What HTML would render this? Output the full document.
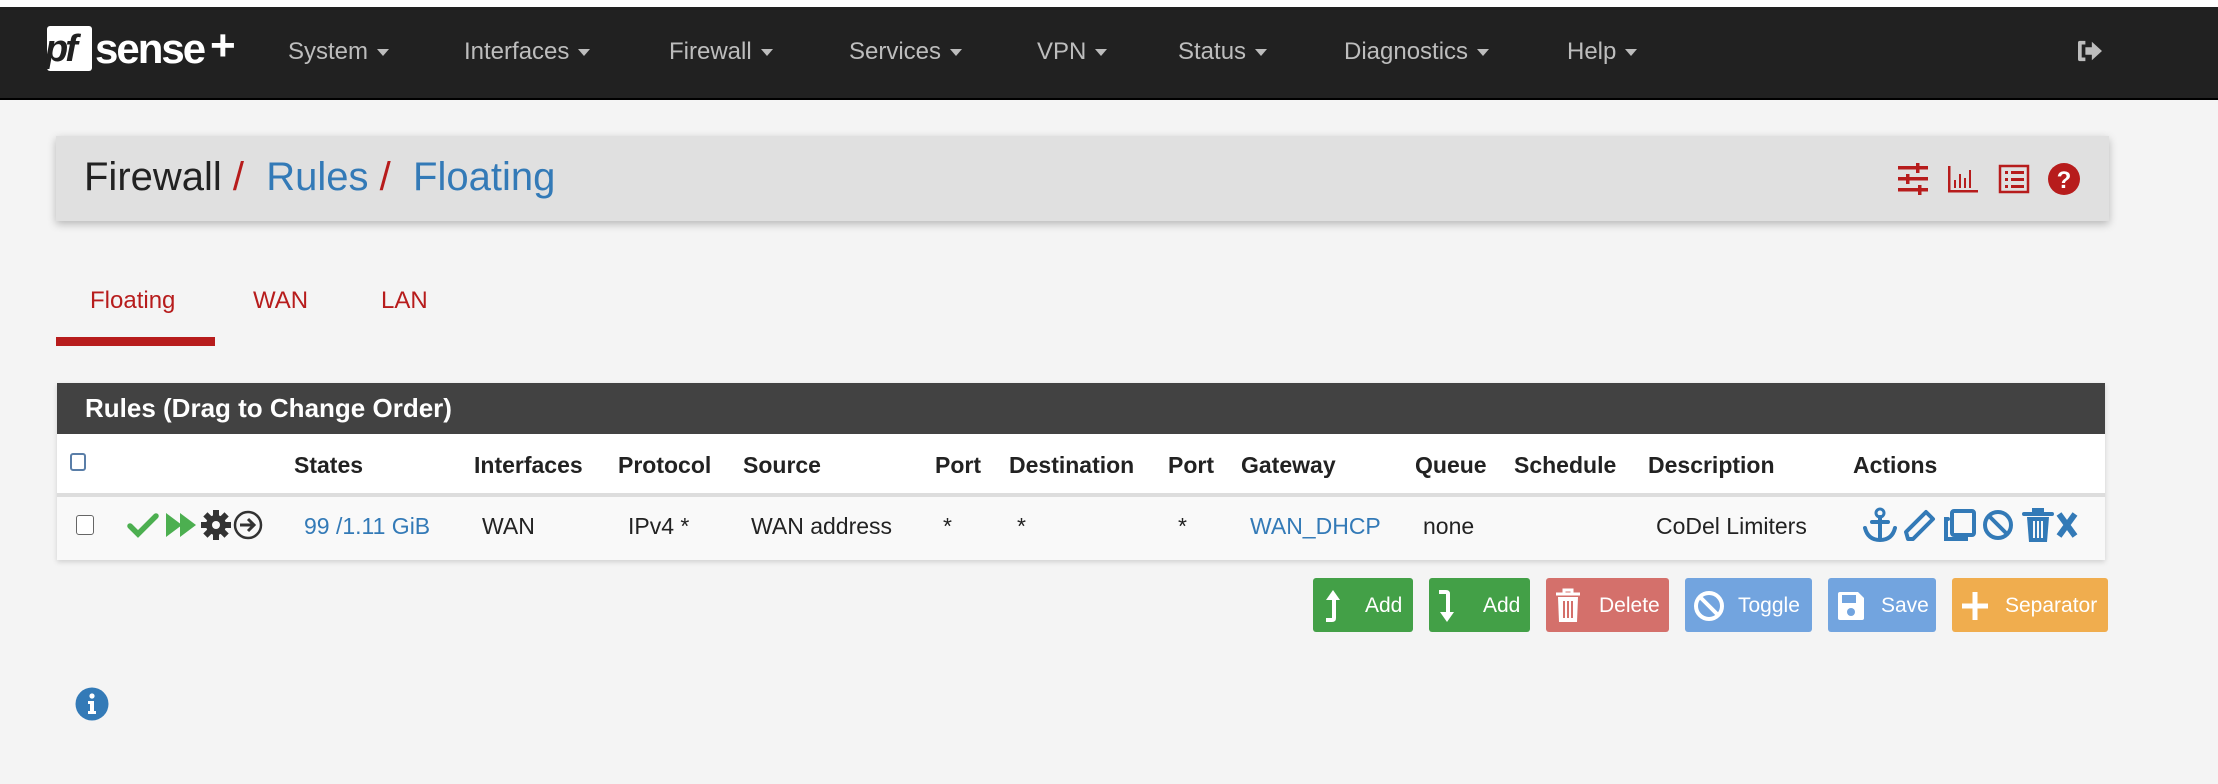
<!DOCTYPE html>
<html><head><meta charset="utf-8"><style>
*{margin:0;padding:0;box-sizing:border-box}
body{width:2218px;height:784px;background:#f4f4f4;font-family:"Liberation Sans",Arial,sans-serif;position:relative;overflow:hidden;color:#222}
.a{position:absolute;white-space:nowrap}
.nav{position:absolute;left:0;top:7px;width:2218px;height:93px;background:#212121;border-bottom:2px solid #000}
.ni{position:absolute;top:31px;color:#bdbdbd;font-size:24px}
.ni:after{content:"";display:inline-block;margin-left:9px;vertical-align:middle;border-left:6px solid transparent;border-right:6px solid transparent;border-top:7px solid #bdbdbd}
.hd{position:absolute;top:452px;font-size:23px;font-weight:bold;color:#222}
.td{position:absolute;top:513px;font-size:23px;color:#222}
.btn{position:absolute;top:578px;height:54px;border-radius:3px;color:#fff;font-size:21px}
.btn span{position:absolute;top:16px}
</style></head><body>
<div class="a" style="left:0;top:0;width:2218px;height:7px;background:#fff"></div>
<div class="nav">
 <div class="a" style="left:47px;top:19px;width:45px;height:45px;background:#fff;border-radius:3px"></div>
 <div class="a" style="left:45px;top:21px;font-size:38px;font-weight:bold;font-style:italic;color:#212121;letter-spacing:-3px">pf</div>
 <div class="a" style="left:95px;top:18px;font-size:42px;font-weight:bold;color:#fff;letter-spacing:-2px">sense</div>
 <div class="a" style="left:210px;top:14px;font-size:44px;font-weight:bold;color:#fff">+</div>
 <div class="ni" style="left:288px">System</div>
 <div class="ni" style="left:464px">Interfaces</div>
 <div class="ni" style="left:669px">Firewall</div>
 <div class="ni" style="left:849px">Services</div>
 <div class="ni" style="left:1037px">VPN</div>
 <div class="ni" style="left:1178px">Status</div>
 <div class="ni" style="left:1344px">Diagnostics</div>
 <div class="ni" style="left:1567px">Help</div>
 <svg class="a" style="left:2076px;top:32px" width="28" height="24" viewBox="0 0 30 26"><path d="M10 2H4Q2 2 2 4V22Q2 24 4 24H10V20H6V6H10Z" fill="#bdbdbd"/><path d="M10 9H17V3L28 13L17 23V17H10Z" fill="#bdbdbd"/></svg>
</div>
<div class="a" style="left:56px;top:136px;width:2053px;height:85px;background:#e0e0e0;box-shadow:0 3px 8px rgba(0,0,0,.25)"></div>
<div class="a" style="left:84px;top:155px;font-size:40px;color:#222">Firewall <span style="color:#b71c1c">/</span> <span style="color:#337ab7">&nbsp;Rules</span> <span style="color:#b71c1c">/</span> <span style="color:#337ab7">&nbsp;Floating</span></div>
<svg class="a" style="left:1896px;top:162px" width="190" height="34" viewBox="0 0 190 34">
 <g fill="#b71c1c"><rect x="2" y="4" width="30" height="3.5"/><rect x="2" y="15" width="30" height="3.5"/><rect x="2" y="26" width="30" height="3.5"/><rect x="20" y="1" width="3.5" height="10"/><rect x="10" y="12" width="3.5" height="10"/><rect x="22" y="23" width="3.5" height="10"/></g>
 <g fill="#b71c1c"><rect x="52" y="4" width="2.5" height="26"/><rect x="52" y="28" width="30" height="2.5"/><rect x="58" y="18" width="2" height="8"/><rect x="63" y="12" width="2" height="14"/><rect x="68" y="16" width="2" height="10"/><rect x="73" y="8" width="2" height="18"/></g>
 <g fill="none" stroke="#b71c1c" stroke-width="2.5"><rect x="104" y="4" width="28" height="26"/></g>
 <g fill="#b71c1c"><rect x="109" y="9" width="3" height="3"/><rect x="115" y="9" width="13" height="3"/><rect x="109" y="16" width="3" height="3"/><rect x="115" y="16" width="13" height="3"/><rect x="109" y="23" width="3" height="3"/><rect x="115" y="23" width="13" height="3"/></g>
 <circle cx="168" cy="17" r="16" fill="#b71c1c"/><text x="168" y="26" text-anchor="middle" font-size="24" font-weight="bold" fill="#fff" font-family="Liberation Sans">?</text>
</svg>
<div class="a" style="left:90px;top:287px;font-size:24px;color:#b71c1c">Floating</div>
<div class="a" style="left:253px;top:287px;font-size:24px;color:#b71c1c">WAN</div>
<div class="a" style="left:381px;top:287px;font-size:24px;color:#b71c1c">LAN</div>
<div class="a" style="left:56px;top:337px;width:159px;height:9px;background:#b71c1c"></div>

<div class="a" style="left:57px;top:383px;width:2048px;height:177px;background:#fff;box-shadow:0 2px 5px rgba(0,0,0,.15)"></div>
<div class="a" style="left:57px;top:383px;width:2048px;height:51px;background:#424242"></div>
<div class="a" style="left:85px;top:393px;font-size:26px;font-weight:bold;color:#fff">Rules (Drag to Change Order)</div>
<div class="a" style="left:57px;top:493px;width:2048px;height:4px;background:#ddd"></div>
<div class="a" style="left:57px;top:497px;width:2048px;height:63px;background:#f9f9f9"></div>
<div class="a" style="left:70px;top:453px;width:16px;height:18px;border:2.5px solid #5a7ea8;border-radius:3px"></div>
<div class="hd" style="left:294px">States</div>
<div class="hd" style="left:474px">Interfaces</div>
<div class="hd" style="left:618px">Protocol</div>
<div class="hd" style="left:743px">Source</div>
<div class="hd" style="left:935px">Port</div>
<div class="hd" style="left:1009px">Destination</div>
<div class="hd" style="left:1168px">Port</div>
<div class="hd" style="left:1241px">Gateway</div>
<div class="hd" style="left:1415px">Queue</div>
<div class="hd" style="left:1514px">Schedule</div>
<div class="hd" style="left:1648px">Description</div>
<div class="hd" style="left:1853px">Actions</div>

<div class="a" style="left:76px;top:515px;width:18px;height:20px;border:1.5px solid #666;border-radius:3px;background:#fff"></div>
<svg class="a" style="left:126px;top:508px" width="140" height="34" viewBox="0 0 140 34">
 <path d="M4 18L12 26L30 8" fill="none" stroke="#4caf50" stroke-width="5.5" stroke-linecap="round"/>
 <path d="M40 5L56 17L40 29Z M54 5L70 17L54 29Z" fill="#4caf50"/>
 <g transform="translate(90 17)" fill="#333"><circle r="10"/><rect x="-3" y="-15" width="6" height="30"/><rect x="-15" y="-3" width="30" height="6"/><g transform="rotate(45)"><rect x="-3" y="-15" width="6" height="30"/><rect x="-15" y="-3" width="30" height="6"/></g><circle r="4" fill="#f9f9f9"/></g>
 <circle cx="122" cy="17" r="13" fill="none" stroke="#333" stroke-width="2.5"/><path d="M114 17H127M122 11L128 17L122 23" fill="none" stroke="#333" stroke-width="3"/>
</svg>
<div class="td" style="left:304px;color:#337ab7">99 /1.11 GiB</div>
<div class="td" style="left:482px">WAN</div>
<div class="td" style="left:628px">IPv4 *</div>
<div class="td" style="left:751px">WAN address</div>
<div class="td" style="left:943px">*</div>
<div class="td" style="left:1017px">*</div>
<div class="td" style="left:1178px">*</div>
<div class="td" style="left:1250px;color:#337ab7">WAN_DHCP</div>
<div class="td" style="left:1423px">none</div>
<div class="td" style="left:1656px">CoDel Limiters</div>
<svg class="a" style="left:1860px;top:506px" width="222" height="38" viewBox="0 0 222 38">
 <g fill="none" stroke="#337ab7" stroke-width="4" stroke-linecap="round">
  <circle cx="20" cy="7" r="4" stroke-width="3"/><path d="M20 11V34M12 16H28M5 22Q8 34 20 34Q32 34 35 22"/>
  <path d="M48 33L46 26L66 6L73 13L53 33Z" stroke-width="4" stroke-linejoin="round"/>
  <rect x="92" y="5" width="22" height="24" rx="2"/><path d="M88 13H86V33H106V31"/>
  <circle cx="138" cy="19" r="13"/><path d="M129 10L147 28"/>
  <path d="M164 8H192M174 8V4H182V8"/>
 </g>
 <path d="M167 11H189L187 36H169Z" fill="#337ab7"/><g stroke="#f9f9f9" stroke-width="2"><path d="M174 15V32M178 15V32M182 15V32"/></g>
 <path d="M199 8L215 30M215 8L199 30" stroke="#337ab7" stroke-width="6"/>
</svg>

<div class="btn" style="left:1313px;width:100px;background:#43a047"><svg class="a" style="left:10px;top:10px" width="20" height="36" viewBox="0 0 20 36"><path d="M10 2L17 12H13V30Q13 34 9 34H3V30H9V12H3Z" fill="#fff"/></svg><span style="left:52px">Add</span></div>
<div class="btn" style="left:1429px;width:101px;background:#43a047"><svg class="a" style="left:8px;top:10px" width="20" height="36" viewBox="0 0 20 36"><path d="M2 2H9Q13 2 13 6V24H17L10 34L3 24H9V6H2Z" fill="#fff"/></svg><span style="left:54px">Add</span></div>
<div class="btn" style="left:1546px;width:123px;background:#d4706b"><svg class="a" style="left:8px;top:10px" width="28" height="36" viewBox="0 0 28 36"><path d="M2 6H26M10 6V2H18V6" stroke="#fff" stroke-width="3" fill="none"/><path d="M4 9H24L23 34H5Z" fill="#fff"/><path d="M10 13V30M14 13V30M18 13V30" stroke="#d4706b" stroke-width="2"/></svg><span style="left:53px">Delete</span></div>
<div class="btn" style="left:1685px;width:127px;background:#72a4df"><svg class="a" style="left:8px;top:12px" width="32" height="32" viewBox="0 0 32 32"><circle cx="16" cy="16" r="13" fill="none" stroke="#fff" stroke-width="4"/><path d="M7 7L25 25" stroke="#fff" stroke-width="4"/></svg><span style="left:53px">Toggle</span></div>
<div class="btn" style="left:1828px;width:108px;background:#72a4df"><svg class="a" style="left:8px;top:12px" width="30" height="32" viewBox="0 0 30 32"><path d="M2 4Q2 2 4 2H22L28 8V28Q28 30 26 30H4Q2 30 2 28Z" fill="#fff"/><rect x="6" y="5" width="14" height="8" fill="#72a4df"/><circle cx="15" cy="22" r="4" fill="#72a4df"/></svg><span style="left:53px">Save</span></div>
<div class="btn" style="left:1952px;width:156px;background:#f0ad4e"><svg class="a" style="left:8px;top:12px" width="30" height="32" viewBox="0 0 30 32"><path d="M15 2V30M2 16H28" stroke="#fff" stroke-width="5"/></svg><span style="left:53px">Separator</span></div>

<svg class="a" style="left:75px;top:687px" width="34" height="34" viewBox="0 0 34 34"><circle cx="17" cy="17" r="16.5" fill="#337ab7"/><circle cx="17" cy="9" r="2.6" fill="#fff"/><path d="M13 14H19V24H21V27H13V24H15V17H13Z" fill="#fff"/></svg>
</body></html>
